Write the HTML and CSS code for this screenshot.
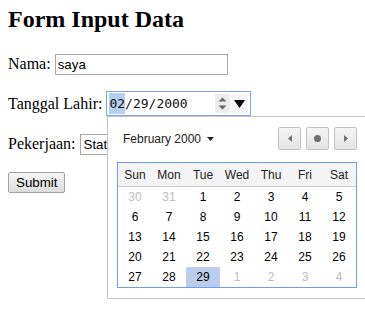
FILE: index.html
```html
<!DOCTYPE html>
<html lang="id">
<head>
    <meta charset="UTF-8">
    <meta name="viewport" content="width=device-width, initial-scale=1.0">
    <title>Form Input Data</title>
    <link rel="stylesheet" href="styles.css">
</head>
<body>
    <h2 class="title">Form Input Data</h2>

    <form class="form">
        <div class="row row-nama">
            <label class="label">Nama:</label>
            <span class="field field-text">saya</span>
        </div>
        <div class="row row-date">
            <label class="label">Tanggal Lahir:</label>
            <span class="field field-date">
                <span class="date-text"><span class="seg seg-active">02</span>/<span class="seg">29</span>/<span class="seg">2000</span></span>
                <span class="spin">
                    <svg width="9" height="13" viewBox="0 0 9 13"><polygon points="4.5,0.5 8.5,4.5 0.5,4.5" fill="#686868"/><polygon points="0.5,8.5 8.5,8.5 4.5,12.5" fill="#686868"/></svg>
                </span>
                <span class="drop">
                    <svg width="11" height="8" viewBox="0 0 11 8"><polygon points="0,0 11,0 5.5,8" fill="#000"/></svg>
                </span>
            </span>
        </div>
        <div class="row row-job">
            <label class="label">Pekerjaan:</label>
            <span class="field field-select">Status</span>
        </div>
        <div class="row row-submit">
            <button type="button" class="submit">Submit</button>
        </div>
    </form>

    <!-- date picker popup, opened under the date field -->
    <div class="picker">
        <div class="picker-head">
            <span class="month">February 2000
                <svg width="7" height="4" viewBox="0 0 7 4"><polygon points="0,0 7,0 3.5,4" fill="#222"/></svg>
            </span>
            <span class="nav">
                <span class="nav-btn"><svg width="4" height="7" viewBox="0 0 4 7"><polygon points="4,0 4,7 0,3.5" fill="#707070"/></svg></span>
                <span class="nav-btn"><svg width="7" height="7" viewBox="0 0 7 7"><circle cx="3.5" cy="3.5" r="3.5" fill="#707070"/></svg></span>
                <span class="nav-btn"><svg width="4" height="7" viewBox="0 0 4 7"><polygon points="0,0 4,3.5 0,7" fill="#707070"/></svg></span>
            </span>
        </div>
        <div class="cal">
            <div class="cal-head">
                <span>Sun</span><span>Mon</span><span>Tue</span><span>Wed</span><span>Thu</span><span>Fri</span><span>Sat</span>
            </div>
            <div class="cal-days">
                <span class="other">30</span><span class="other">31</span><span>1</span><span>2</span><span>3</span><span>4</span><span>5</span>
                <span>6</span><span>7</span><span>8</span><span>9</span><span>10</span><span>11</span><span>12</span>
                <span>13</span><span>14</span><span>15</span><span>16</span><span>17</span><span>18</span><span>19</span>
                <span>20</span><span>21</span><span>22</span><span>23</span><span>24</span><span>25</span><span>26</span>
                <span>27</span><span>28</span><span class="selected">29</span><span class="other">1</span><span class="other">2</span><span class="other">3</span><span class="other">4</span>
            </div>
        </div>
    </div>
</body>
</html>
```

FILE: styles.css
```css
body {
    margin: 0;
    padding: 0 8px;
    font-family: "Liberation Serif", "Times New Roman", serif;
    font-size: 16px;
    color: #000;
    background-color: #fff;
}
.title {
    margin: 6px 0 0;
    font-size: 24px;
    line-height: 27px;
    font-weight: bold;
}
.form {
    display: flex;
    flex-direction: column;
    gap: 16px;
    margin-top: 20px;
}
.row {
    display: flex;
    align-items: center;
    gap: 4px;
}
.row-nama { height: 22px; }
.row-date { height: 25px; }
.row-job { height: 24px; }
.row-submit { height: 21px; }

.field {
    box-sizing: border-box;
    display: flex;
    align-items: center;
    font-family: "Liberation Sans", Arial, sans-serif;
    font-size: 13.33px;
    background-color: #fff;
}
.field-text {
    width: 173px;
    height: 21px;
    padding: 0 2px;
    border: 1px solid #a9a9a9;
}
.field-select {
    width: 90px;
    height: 21px;
    padding: 0 3px;
    border: 1px solid #a9a9a9;
}
.field-date {
    width: 145px;
    height: 25px;
    padding: 0 2px 0 2px;
    border: 1px solid #7da5ec;
}
.date-text {
    flex: 1;
    font-family: "DejaVu Sans Mono", "Liberation Mono", monospace;
    font-size: 13px;
    color: #111;
}
.seg-active {
    background-color: #b5d0f4;
    padding: 3px 0;
}
.spin {
    display: flex;
    align-items: center;
    justify-content: center;
    width: 15px;
    height: 19px;
    background-color: #ececec;
}
.drop {
    display: flex;
    align-items: center;
    justify-content: center;
    width: 17px;
    height: 19px;
    margin-left: 1px;
    background-color: #f4f4f4;
}
.submit {
    height: 21px;
    padding: 0 7px;
    font-family: "Liberation Sans", Arial, sans-serif;
    font-size: 13.33px;
    color: #000;
    border: 1px solid #a3a3a3;
    border-radius: 2px;
    background: linear-gradient(#f6f6f6, #dddddd);
}

/* popup */
.picker {
    position: absolute;
    left: 107px;
    top: 116px;
    box-sizing: border-box;
    width: 260px;
    height: 183px;
    padding: 10px 9px;
    border: 1px solid #c4c4c4;
    background-color: #fff;
    font-family: "Liberation Sans", Arial, sans-serif;
    font-size: 12px;
}
.picker-head {
    display: flex;
    justify-content: space-between;
    align-items: center;
    height: 23px;
    margin-bottom: 12px;
}
.month {
    display: flex;
    align-items: center;
    gap: 6px;
    padding-left: 6px;
    color: #222;
}
.nav {
    display: flex;
    gap: 5px;
}
.nav-btn {
    box-sizing: border-box;
    display: flex;
    align-items: center;
    justify-content: center;
    width: 23px;
    height: 23px;
    border: 1px solid #c2c2c2;
    border-radius: 2px;
    background: linear-gradient(#f5f5f5, #e4e4e4);
}
.cal {
    border: 1px solid #6d9eeb;
}
.cal-head,
.cal-days {
    display: grid;
    grid-template-columns: repeat(7, 34px);
}
.cal-head {
    height: 23px;
    align-items: center;
    background-color: #f4f4f4;
    border-bottom: 1px solid #cccccc;
    color: #222;
}
.cal-head span,
.cal-days span {
    text-align: center;
}
.cal-days span {
    height: 20px;
    line-height: 20px;
    color: #000;
}
.cal-days .other {
    color: #bdbdbd;
}
.cal-days .selected {
    background-color: #bccdec;
}
```
